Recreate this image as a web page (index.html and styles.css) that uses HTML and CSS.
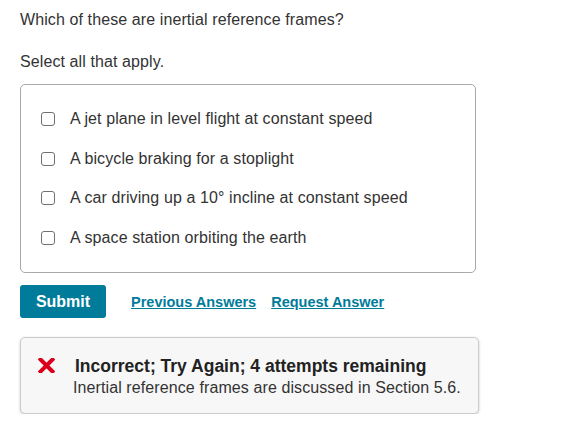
FILE: index.html
```html
<!DOCTYPE html>
<html>
<head>
<meta charset="utf-8">
<link rel="stylesheet" href="styles.css">
</head>
<body>
<div class="page">
  <p class="question">Which of these are inertial reference frames?</p>
  <p class="instruction">Select all that apply.</p>
  <div class="options">
    <label class="option"><span class="box"></span><span class="opt-text">A jet plane in level flight at constant speed</span></label>
    <label class="option"><span class="box"></span><span class="opt-text">A bicycle braking for a stoplight</span></label>
    <label class="option"><span class="box"></span><span class="opt-text">A car driving up a 10° incline at constant speed</span></label>
    <label class="option"><span class="box"></span><span class="opt-text">A space station orbiting the earth</span></label>
  </div>
  <div class="actions">
    <button class="submit">Submit</button>
    <a class="link" href="#">Previous Answers</a>
    <a class="link" href="#">Request Answer</a>
  </div>
  <div class="feedback">
    <svg class="xicon" width="17" height="15" viewBox="0 0 17 15"><path d="M2.5 1.5 L14.5 13.5 M14.5 1.5 L2.5 13.5" stroke="#d9001b" stroke-width="4" stroke-linecap="square"/></svg>
    <div class="fb-text">
      <div class="fb-title">Incorrect; Try Again; 4 attempts remaining</div>
      <div class="fb-body">Inertial reference frames are discussed in Section 5.6.</div>
    </div>
  </div>
</div>
</body>
</html>
```
FILE: styles.css
```css
html, body { margin: 0; padding: 0; background: #fff; }
body { font-family: "Liberation Sans", Arial, sans-serif; color: #333; font-size: 16px; letter-spacing: 0.1px; }
.page { padding: 11px 20px 0 20px; width: 460px; }
.question { margin: 0; line-height: 18px; }
.instruction { margin: 24px 0 0 0; line-height: 18px; }
.options {
  margin-top: 13px;
  border: 1px solid #aaa;
  border-radius: 5px;
  width: 456px;
  height: 189px;
  box-sizing: border-box;
  padding: 25px 0 0 20px;
  display: flex;
  flex-direction: column;
  gap: 21.5px;
}
.option { display: flex; align-items: center; height: 18px; }
.box {
  width: 12px; height: 12px;
  border: 1px solid #707070;
  border-radius: 3px;
  margin-right: 15px;
  flex: none;
}
.opt-text { line-height: 18px; }
.actions { margin-top: 12px; display: flex; align-items: center; height: 33px; letter-spacing: 0; }
.submit {
  background: #007c9a;
  color: #fff;
  border: none;
  border-radius: 3px;
  font-family: "Liberation Sans", Arial, sans-serif;
  font-weight: bold;
  font-size: 16px;
  width: 86px; height: 33px;
  padding: 0;
  margin-right: 25px;
}
.link {
  color: #007c9a;
  font-weight: bold;
  font-size: 14.5px;
  text-decoration: underline;
  margin-right: 15px;
}
.feedback {
  margin-top: 19px;
  width: 459px;
  height: 77px;
  box-sizing: border-box;
  background: #f7f7f7;
  border: 1px solid #ccc;
  border-radius: 5px;
  box-shadow: 0 1px 3px rgba(0,0,0,0.2);
  display: flex;
  align-items: flex-start;
  padding: 20px 0 0 17px;
}
.xicon { flex: none; margin-right: 20px; margin-top: 0; }
.fb-text { margin-top: -2px; }
.fb-title { font-weight: bold; font-size: 17.5px; line-height: 20px; color: #222; letter-spacing: 0; }
.fb-body { font-size: 16px; line-height: 20px; margin-top: 2px; margin-left: -2px; color: #333; }
```
